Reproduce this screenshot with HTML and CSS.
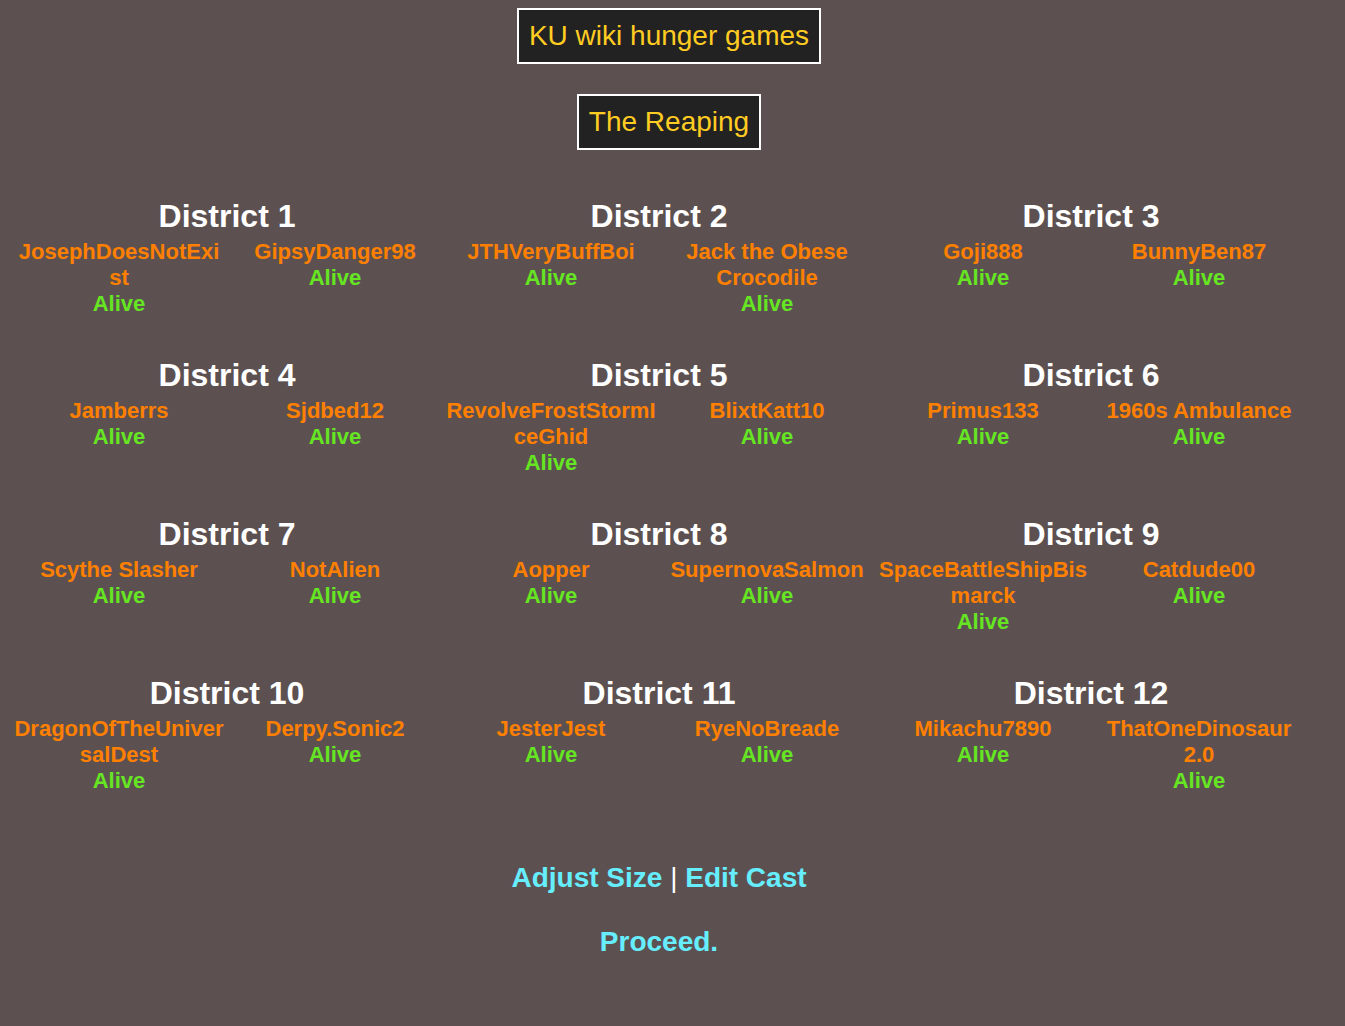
FILE: index.html
```html
<!DOCTYPE html>
<html lang="en">
<head>
    <meta charset="UTF-8">
    <meta name="viewport" content="width=device-width, initial-scale=1.0">
    <title>KU wiki hunger games</title>
    <link rel="stylesheet" href="styles.css">
</head>
<body>
    <div class="page">
        <div class="header">
            <div class="title-row"><span class="title-box">KU wiki hunger games</span></div>
            <div class="title-row reaping"><span class="title-box">The Reaping</span></div>
        </div>

        <div class="districts">
            <div class="district">
                <h2>District 1</h2>
                <div class="tributes">
                    <div class="tribute"><span class="name">JosephDoesNotExist</span><span class="status">Alive</span></div>
                    <div class="tribute"><span class="name">GipsyDanger98</span><span class="status">Alive</span></div>
                </div>
            </div>
            <div class="district">
                <h2>District 2</h2>
                <div class="tributes">
                    <div class="tribute"><span class="name">JTHVeryBuffBoi</span><span class="status">Alive</span></div>
                    <div class="tribute"><span class="name">Jack the Obese Crocodile</span><span class="status">Alive</span></div>
                </div>
            </div>
            <div class="district">
                <h2>District 3</h2>
                <div class="tributes">
                    <div class="tribute"><span class="name">Goji888</span><span class="status">Alive</span></div>
                    <div class="tribute"><span class="name">BunnyBen87</span><span class="status">Alive</span></div>
                </div>
            </div>

            <div class="district">
                <h2>District 4</h2>
                <div class="tributes">
                    <div class="tribute"><span class="name">Jamberrs</span><span class="status">Alive</span></div>
                    <div class="tribute"><span class="name">Sjdbed12</span><span class="status">Alive</span></div>
                </div>
            </div>
            <div class="district">
                <h2>District 5</h2>
                <div class="tributes">
                    <div class="tribute"><span class="name">RevolveFrostStormIceGhid</span><span class="status">Alive</span></div>
                    <div class="tribute"><span class="name">BlixtKatt10</span><span class="status">Alive</span></div>
                </div>
            </div>
            <div class="district">
                <h2>District 6</h2>
                <div class="tributes">
                    <div class="tribute"><span class="name">Primus133</span><span class="status">Alive</span></div>
                    <div class="tribute"><span class="name">1960s Ambulance</span><span class="status">Alive</span></div>
                </div>
            </div>

            <div class="district">
                <h2>District 7</h2>
                <div class="tributes">
                    <div class="tribute"><span class="name">Scythe Slasher</span><span class="status">Alive</span></div>
                    <div class="tribute"><span class="name">NotAlien</span><span class="status">Alive</span></div>
                </div>
            </div>
            <div class="district">
                <h2>District 8</h2>
                <div class="tributes">
                    <div class="tribute"><span class="name">Aopper</span><span class="status">Alive</span></div>
                    <div class="tribute"><span class="name">SupernovaSalmon</span><span class="status">Alive</span></div>
                </div>
            </div>
            <div class="district">
                <h2>District 9</h2>
                <div class="tributes">
                    <div class="tribute"><span class="name">SpaceBattleShipBismarck</span><span class="status">Alive</span></div>
                    <div class="tribute"><span class="name">Catdude00</span><span class="status">Alive</span></div>
                </div>
            </div>

            <div class="district">
                <h2>District 10</h2>
                <div class="tributes">
                    <div class="tribute"><span class="name">DragonOfTheUniversalDest</span><span class="status">Alive</span></div>
                    <div class="tribute"><span class="name">Derpy.Sonic2</span><span class="status">Alive</span></div>
                </div>
            </div>
            <div class="district">
                <h2>District 11</h2>
                <div class="tributes">
                    <div class="tribute"><span class="name">JesterJest</span><span class="status">Alive</span></div>
                    <div class="tribute"><span class="name">RyeNoBreade</span><span class="status">Alive</span></div>
                </div>
            </div>
            <div class="district">
                <h2>District 12</h2>
                <div class="tributes">
                    <div class="tribute"><span class="name">Mikachu7890</span><span class="status">Alive</span></div>
                    <div class="tribute"><span class="name">ThatOneDinosaur 2.0</span><span class="status">Alive</span></div>
                </div>
            </div>
        </div>

        <div class="links">
            <a href="#">Adjust Size</a> <span class="sep">|</span> <a href="#">Edit Cast</a>
        </div>
        <div class="links proceed">
            <a href="#">Proceed.</a>
        </div>
    </div>
</body>
</html>
```

FILE: styles.css
```css
/* Base */
body {
    margin: 8px;
    background-color: #5c5150;
    font-family: 'Liberation Sans', Arial, sans-serif;
    color: #ffffff;
}

.page {
    width: 1302px;
    text-align: center;
}

/* Title boxes */
.header {
    padding-left: 20px;
}

.title-row {
    line-height: 0;
}

.reaping {
    margin-top: 30px;
}

.title-box {
    display: inline-block;
    padding: 10px 10px;
    border: 2px solid #ffffff;
    background-color: #222222;
    color: #ffcc22;
    font-size: 28px;
    line-height: 32px;
}

/* District grid */
.districts {
    display: grid;
    grid-template-columns: repeat(3, 432px);
    row-gap: 40px;
    margin: 48px 0 0 3px;
}

.district h2 {
    margin: 0 0 4px;
    font-size: 32px;
    line-height: 37px;
    font-weight: bold;
    color: #ffffff;
}

.tributes {
    display: grid;
    grid-template-columns: 216px 216px;
}

.tribute {
    display: flex;
    flex-direction: column;
    padding: 0 2.5px;
    font-size: 22px;
    line-height: 26px;
    font-weight: bold;
    overflow-wrap: anywhere;
}

.name {
    color: #ff8000;
}

.status {
    color: #66e522;
}

/* Bottom links */
.links {
    margin-top: 68px;
    font-size: 28px;
    line-height: 32px;
}

.links a {
    color: #66eeff;
    font-weight: bold;
    text-decoration: none;
}

.links .sep {
    color: #ffffff;
}

.proceed {
    margin-top: 32px;
}
```
